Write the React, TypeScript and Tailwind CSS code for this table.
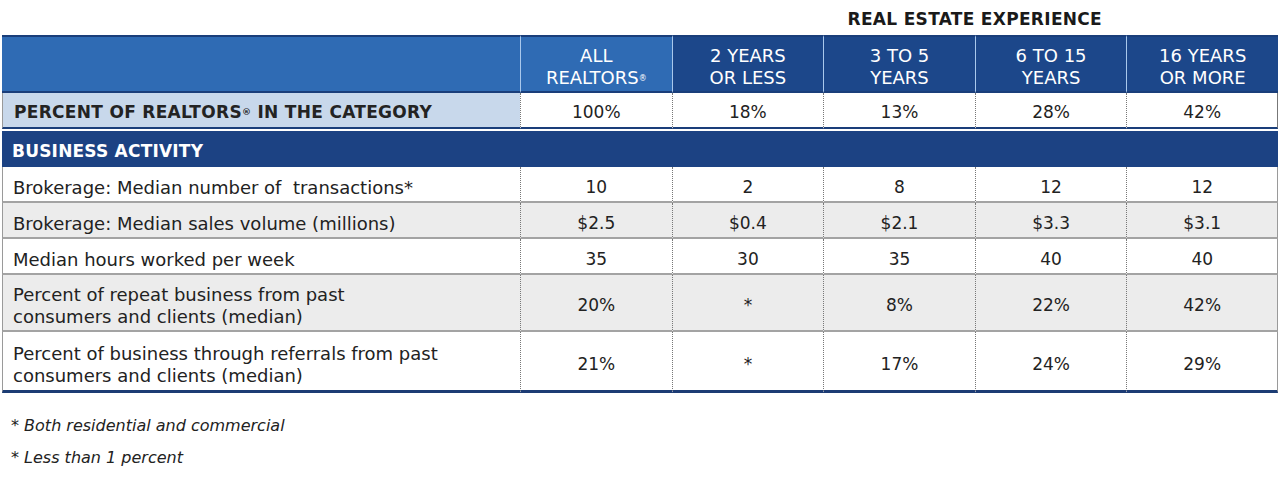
import React from "react";

const cols = ["100%", "18%", "13%", "28%", "42%"];

const rows: { label: string[]; vals: string[]; tall?: boolean; gray?: boolean }[] = [
  { label: ["Brokerage: Median number of\u00a0 transactions*"], vals: ["10", "2", "8", "12", "12"] },
  { label: ["Brokerage: Median sales volume (millions)"], vals: ["$2.5", "$0.4", "$2.1", "$3.3", "$3.1"], gray: true },
  { label: ["Median hours worked per week"], vals: ["35", "30", "35", "40", "40"] },
  {
    label: ["Percent of repeat business from past", "consumers and clients (median)"],
    vals: ["20%", "*", "8%", "22%", "42%"],
    tall: true,
    gray: true,
  },
  {
    label: ["Percent of business through referrals from past", "consumers and clients (median)"],
    vals: ["21%", "*", "17%", "24%", "29%"],
    tall: true,
  },
];

const font = { fontFamily: '"DejaVu Sans", "Noto Sans", sans-serif' };

export default function App() {
  return (
    <div className="w-[1280px] h-[497px] bg-white text-[#222]" style={font}>
      <div className="grid grid-cols-[518px_repeat(5,1fr)] w-[1276px] ml-[2px]">
        {/* title */}
        <div className="col-span-2 h-[35px]" />
        <div className="col-span-4 h-[35px] flex items-center justify-center text-[17px] tracking-[0.3px] font-bold text-[#1a1a1a] pt-[4px]">
          REAL ESTATE EXPERIENCE
        </div>

        {/* header row */}
        <div className="h-[58px] bg-[#2f6bb4] border-t-2 border-b-2 border-[#1a3e7a]" />
        {["ALL|REALTORS®", "2 YEARS|OR LESS", "3 TO 5|YEARS", "6 TO 15|YEARS", "16 YEARS|OR MORE"].map((h, i) => (
          <div
            key={h}
            className={`h-[58px] border-t-2 border-b-2 border-[#1a3e7a] flex flex-col items-center justify-center pt-[5px] text-white text-[18px] leading-[22px] border-l border-l-[#a9c8ec] ${
              i === 0 ? "bg-[#2f6bb4]" : "bg-[#1c478a]"
            }`}
          >
            {h.split("|").map((t) => (
              <span key={t}>
                {t.endsWith("®") ? (
                  <>
                    {t.slice(0, -1)}
                    <sup className="text-[8px] relative top-[-3px]">®</sup>
                  </>
                ) : (
                  t
                )}
              </span>
            ))}
          </div>
        ))}

        {/* percent row */}
        <div className="h-[36px] bg-[#c8d8eb] flex items-center pl-[11px] pt-[5px] text-[17px] tracking-[0.3px] font-bold text-[#232323] border-l border-[#999] border-b-2 border-b-[#1a3e7a]">
          PERCENT OF REALTORS
          <sup className="text-[9px] relative top-[-1px]">®</sup>
          &nbsp;IN THE CATEGORY
        </div>
        {cols.map((v, i) => (
          <div
            key={i}
            className={`h-[36px] bg-white flex items-center justify-center pt-[5px] text-[17px] border-l [border-left-style:dotted] border-l-[#777] border-b-2 border-b-[#1a3e7a] ${
              i === 4 ? "border-r border-r-[#777]" : ""
            }`}
          >
            {v}
          </div>
        ))}

        {/* business activity */}
        <div className="col-span-6 h-[36px] mt-[2px] bg-[#1c4283] flex items-center pl-[10px] pt-[5px] text-white text-[17px] tracking-[0.2px] font-bold">
          BUSINESS ACTIVITY
        </div>

        {/* body rows */}
        {rows.map((r, ri) => {
          const last = ri === rows.length - 1;
          const h = r.tall ? (last ? "h-[61px]" : "h-[57px]") : "h-[36px]";
          const bottom = last ? "border-b-[3px] border-b-[#1c3c74]" : "border-b-2 border-b-[#a3a3a3]";
          const bg = r.gray ? "bg-[#ececec]" : "bg-white";
          return (
            <React.Fragment key={ri}>
              <div
                className={`${h} ${bg} flex flex-col justify-center pl-[10px] pt-[7px] text-[18px] leading-[22px] border-l border-l-[#9a9a9a] ${bottom}`}
              >
                {r.label.map((l) => (
                  <span key={l}>{l}</span>
                ))}
              </div>
              {r.vals.map((v, i) => (
                <div
                  key={i}
                  className={`${h} ${bg} flex items-center justify-center pt-[7px] text-[17px] border-l [border-left-style:dotted] border-l-[#777] ${bottom} ${
                    i === 4 ? "border-r border-r-[#9a9a9a]" : ""
                  }`}
                >
                  {v}
                </div>
              ))}
            </React.Fragment>
          );
        })}
      </div>

      {/* footnotes */}
      <div className="pl-[11px] pt-[22px] text-[16px] italic text-[#222] flex flex-col gap-[10px] leading-[22px]">
        <span>* Both residential and commercial</span>
        <span>* Less than 1 percent</span>
      </div>
    </div>
  );
}
